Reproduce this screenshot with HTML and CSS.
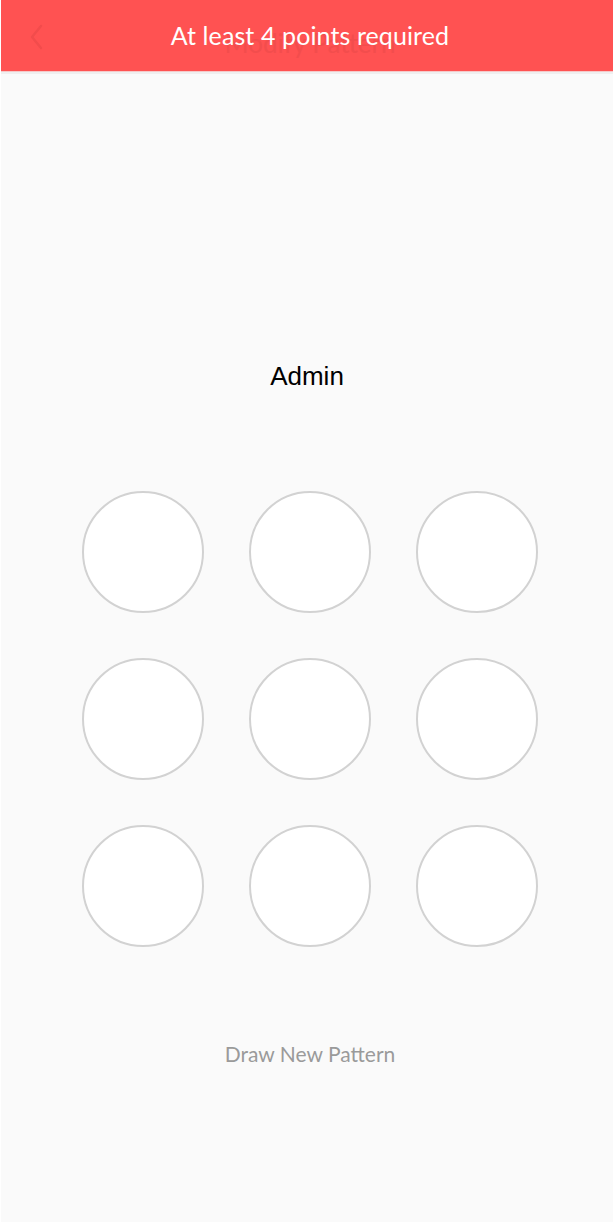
FILE: index.html
```html
<!DOCTYPE html>
<html lang="en">
<head>
<meta charset="utf-8">
<title>Modify Pattern</title>
<link rel="stylesheet" href="styles.css">
</head>
<body>
<div class="app">
  <header class="topbar">
    <svg class="back" width="14" height="26" viewBox="0 0 14 26"><path d="M12 2 L3 13 L12 24" fill="none" stroke="#f24c4c" stroke-width="2.4" stroke-linecap="round" stroke-linejoin="round"/></svg>
    <div class="ghost-title">Modify Pattern</div>
    <div class="toast">At least 4 points required</div>
  </header>
  <main class="content">
    <div class="user">Admin</div>
    <div class="grid">
      <div class="dot"></div><div class="dot"></div><div class="dot"></div>
      <div class="dot"></div><div class="dot"></div><div class="dot"></div>
      <div class="dot"></div><div class="dot"></div><div class="dot"></div>
    </div>
    <div class="hint">Draw New Pattern</div>
  </main>
</div>
</body>
</html>
```
FILE: styles.css
```css
html, body {
  margin: 0;
  padding: 0;
  background: #ffffff;
}
.app {
  margin-left: 1px;
  width: 612px;
  height: 1222px;
  background: #fafafa;
  display: flex;
  flex-direction: column;
}
.topbar {
  position: relative;
  height: 71px;
  background: #ff5252;
  border-bottom: 1px solid #f5c9c9;
  display: flex;
  align-items: center;
  justify-content: center;
}
.back {
  position: absolute;
  left: 28px;
  top: 24px;
}
.ghost-title {
  position: absolute;
  left: 0;
  right: 0;
  top: 28px;
  text-align: center;
  padding-left: 6px;
  font-family: "Lato", "Noto Sans", sans-serif;
  font-size: 26px;
  line-height: 30px;
  color: #f34d4d;
}
.toast {
  position: relative;
  padding-left: 6px;
  margin-top: -2px;
  font-family: "Lato", "Noto Sans", sans-serif;
  font-size: 25px;
  font-weight: 400;
  color: #ffffff;
  letter-spacing: 0.1px;
}
.content {
  flex: 1;
  border-top: 2px solid #efefef;
  display: flex;
  flex-direction: column;
  align-items: flex-start;
}
.user {
  align-self: stretch;
  text-align: center;
  margin-top: 286px;
  font-family: "Liberation Sans", Arial, sans-serif;
  font-size: 26px;
  line-height: 32px;
  color: #000;
}
.grid {
  margin-top: 99px;
  margin-left: 81px;
  display: grid;
  grid-template-columns: repeat(3, 122px);
  grid-auto-rows: 122px;
  column-gap: 45px;
  row-gap: 45px;
}
.dot {
  box-sizing: border-box;
  width: 122px;
  height: 122px;
  border-radius: 50%;
  background: #ffffff;
  border: 2px solid #d2d2d2;
}
.hint {
  align-self: stretch;
  text-align: center;
  padding-left: 6px;
  margin-top: 94px;
  font-family: "Lato", "Noto Sans", sans-serif;
  font-size: 21px;
  font-weight: 400;
  line-height: 26px;
  color: #9a9a9a;
}
```
